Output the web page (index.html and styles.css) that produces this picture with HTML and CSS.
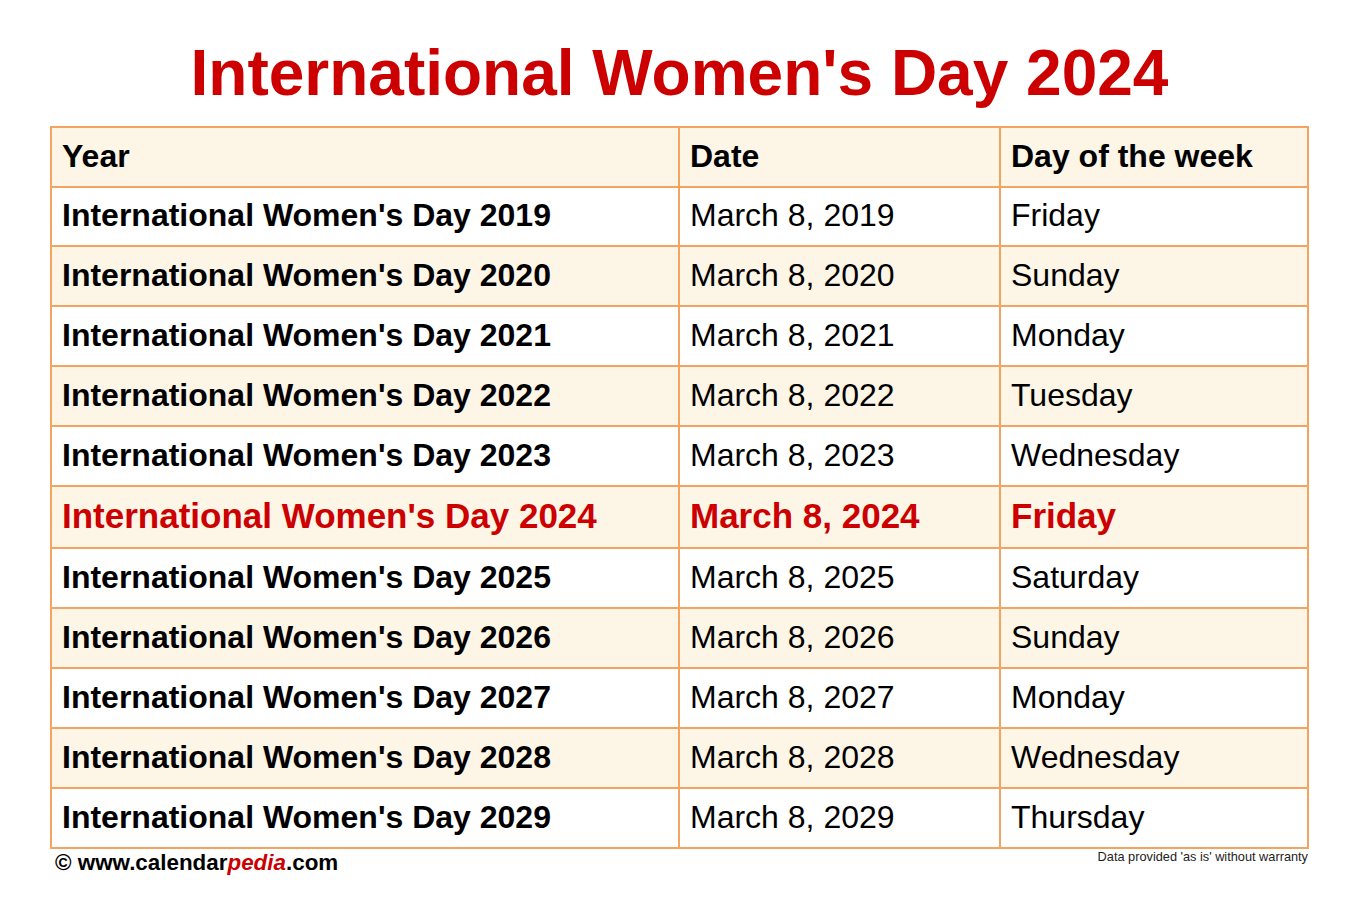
FILE: index.html
```html
<!DOCTYPE html>
<html lang="en">
<head>
<meta charset="utf-8">
<title>International Women's Day 2024</title>
<link rel="stylesheet" href="styles.css">
</head>
<body>
<div class="page">
  <h1 class="title">International Women's Day 2024</h1>
  <table class="dates">
    <colgroup>
      <col class="c1"><col class="c2"><col class="c3">
    </colgroup>
    <thead>
      <tr class="alt head"><th>Year</th><th>Date</th><th>Day of the week</th></tr>
    </thead>
    <tbody>
      <tr class="short"><td class="name">International Women's Day 2019</td><td>March 8, 2019</td><td>Friday</td></tr>
      <tr class="alt"><td class="name">International Women's Day 2020</td><td>March 8, 2020</td><td>Sunday</td></tr>
      <tr><td class="name">International Women's Day 2021</td><td>March 8, 2021</td><td>Monday</td></tr>
      <tr class="alt"><td class="name">International Women's Day 2022</td><td>March 8, 2022</td><td>Tuesday</td></tr>
      <tr><td class="name">International Women's Day 2023</td><td>March 8, 2023</td><td>Wednesday</td></tr>
      <tr class="alt current"><td class="name">International Women's Day 2024</td><td>March 8, 2024</td><td>Friday</td></tr>
      <tr><td class="name">International Women's Day 2025</td><td>March 8, 2025</td><td>Saturday</td></tr>
      <tr class="alt"><td class="name">International Women's Day 2026</td><td>March 8, 2026</td><td>Sunday</td></tr>
      <tr><td class="name">International Women's Day 2027</td><td>March 8, 2027</td><td>Monday</td></tr>
      <tr class="alt"><td class="name">International Women's Day 2028</td><td>March 8, 2028</td><td>Wednesday</td></tr>
      <tr><td class="name">International Women's Day 2029</td><td>March 8, 2029</td><td>Thursday</td></tr>
    </tbody>
  </table>
  <div class="footer">
    <span class="brand">© www.calendar<em>pedia</em>.com</span>
    <span class="note">Data provided 'as is' without warranty</span>
  </div>
</div>
</body>
</html>
```

FILE: styles.css
```css
html, body {
  margin: 0;
  padding: 0;
  background: #ffffff;
}

body {
  font-family: "Liberation Sans", Arial, sans-serif;
  color: #000;
}

.page {
  width: 1259px;
  margin-left: 50px;
  padding-top: 36px;
}

.title {
  margin: 0 0 16px 0;
  font-size: 64px;
  line-height: 74px;
  font-weight: bold;
  color: #cc0000;
  text-align: center;
}

.dates {
  width: 1257px;
  border-collapse: collapse;
  table-layout: fixed;
  border: 2px solid #f4a460;
}

.c1 { width: 628px; }
.c2 { width: 321px; }
.c3 { width: 308px; }

.dates th,
.dates td {
  border: 2px solid #f4a460;
  height: 56px;
  padding: 0 10px 2px 10px;
  font-size: 32px;
  text-align: left;
  vertical-align: middle;
  white-space: nowrap;
}

.dates th {
  font-weight: bold;
}

.dates td {
  font-weight: normal;
}

.dates td.name {
  font-weight: bold;
}

.dates tr.short td {
  height: 55px;
}

.dates tr.alt {
  background: #fdf5e6;
}

.dates tr.current td {
  height: 58px;
  font-size: 35px;
  font-weight: bold;
  color: #cc0000;
}

.footer {
  display: flex;
  justify-content: space-between;
  align-items: flex-start;
  padding-top: 1px;
}

.brand {
  padding-left: 5px;
  font-size: 22.4px;
  line-height: 26px;
  font-weight: bold;
  color: #000;
}

.brand em {
  font-style: italic;
  color: #cc0000;
}

.note {
  font-size: 12.75px;
  line-height: 15px;
  color: #222;
  margin-top: -1px;
  padding-right: 1px;
}
```
